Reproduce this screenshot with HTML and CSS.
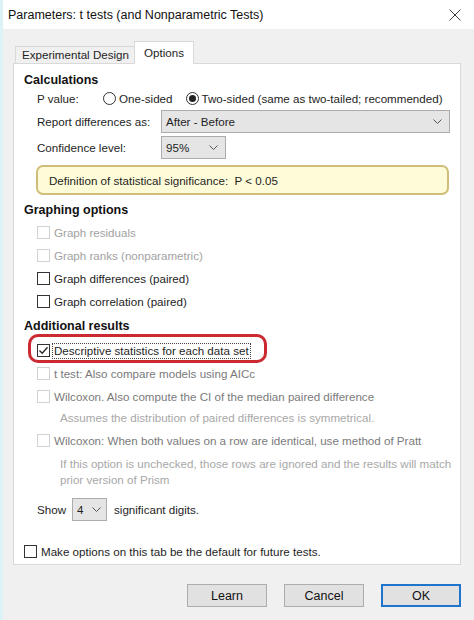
FILE: index.html
```html
<!DOCTYPE html>
<html>
<head>
<meta charset="utf-8">
<link rel="stylesheet" href="styles.css">
</head>
<body>
<div class="window">
  <div class="titlebar">
    <span class="title">Parameters: t tests (and Nonparametric Tests)</span>
    <svg class="close" width="12" height="12" viewBox="0 0 12 12"><path d="M0.5 0.5 L11.5 11.5 M11.5 0.5 L0.5 11.5" stroke="#3a3a3a" stroke-width="1" fill="none"/></svg>
  </div>
  <div class="content">
    <div class="tabs">
      <div class="tab">Experimental Design</div>
      <div class="tab active">Options</div>
    </div>
    <div class="panel">
      <div class="section-title">Calculations</div>
      <div class="row pvalue">
        <span class="plabel">P value:</span>
        <span class="radio"></span><span class="opt1">One-sided</span>
        <span class="radio checked"></span><span>Two-sided (same as two-tailed; recommended)</span>
      </div>
      <div class="row field">
        <span class="flabel">Report differences as:</span>
        <div class="select wide"><span>After - Before</span><svg class="chev" width="9" height="5" viewBox="0 0 9 5"><path d="M0.5 0.5 L4.5 4.5 L8.5 0.5" stroke="#555" fill="none"/></svg></div>
      </div>
      <div class="row field">
        <span class="flabel">Confidence level:</span>
        <div class="select narrow"><span>95%</span><svg class="chev" width="9" height="5" viewBox="0 0 9 5"><path d="M0.5 0.5 L4.5 4.5 L8.5 0.5" stroke="#555" fill="none"/></svg></div>
      </div>
      <div class="note-box">Definition of statistical significance:&nbsp; P &lt; 0.05</div>

      <div class="section-title graph-title">Graphing options</div>
      <div class="row check first-check dis-light"><span class="cb disabled"></span><span class="cbtext">Graph residuals</span></div>
      <div class="row check dis-light"><span class="cb disabled"></span><span class="cbtext">Graph ranks (nonparametric)</span></div>
      <div class="row check"><span class="cb"></span><span class="cbtext">Graph differences (paired)</span></div>
      <div class="row check"><span class="cb"></span><span class="cbtext">Graph correlation (paired)</span></div>

      <div class="section-title add-title">Additional results</div>
      <div class="row check desc">
        <span class="cb"><svg width="13" height="13" viewBox="0 0 13 13"><path d="M2.5 6.5 L5.2 9.2 L10.5 3.2" stroke="#222" stroke-width="1.3" fill="none"/></svg></span>
        <span class="focus">Descriptive statistics for each data set</span>
        <span class="highlight"></span>
      </div>
      <div class="row check dis"><span class="cb disabled"></span><span class="cbtext">t test: Also compare models using AICc</span></div>
      <div class="row check dis"><span class="cb disabled"></span><span class="cbtext">Wilcoxon. Also compute the CI of the median paired difference</span></div>
      <div class="hint one">Assumes the distribution of paired differences is symmetrical.</div>
      <div class="row check dis w2"><span class="cb disabled"></span><span class="cbtext">Wilcoxon: When both values on a row are identical, use method of Pratt</span></div>
      <div class="hint two">If this option is unchecked, those rows are ignored and the results will match<br>prior version of Prism</div>

      <div class="row show">
        <span>Show</span>
        <div class="select digits"><span>4</span><svg class="chev" width="9" height="5" viewBox="0 0 9 5"><path d="M0.5 0.5 L4.5 4.5 L8.5 0.5" stroke="#555" fill="none"/></svg></div>
        <span>significant digits.</span>
      </div>

      <div class="row make"><span class="cb"></span><span class="maketext">Make options on this tab be the default for future tests.</span></div>
    </div>
    <div class="buttons">
      <button class="btn">Learn</button>
      <button class="btn">Cancel</button>
      <button class="btn default">OK</button>
    </div>
  </div>
</div>
</body>
</html>
```
FILE: styles.css
```css
* { box-sizing: border-box; }
html, body { margin: 0; padding: 0; }
body {
  width: 474px;
  height: 620px;
  overflow: hidden;
  font-family: "Liberation Sans", Arial, sans-serif;
  font-size: 11.6px;
  color: #1e1e1e;
  background: #f0f0f0;
}
.window {
  height: 620px;
  border-left: 3px solid #dcf3f6;
  display: flex;
  flex-direction: column;
}
.titlebar {
  height: 29px;
  background: #fff;
  display: flex;
  align-items: center;
  justify-content: space-between;
  padding: 0 13px 0 5px;
  font-size: 12.5px;
  color: #111;
}
.close { display: block; }
.content {
  padding: 12px 13px 0 10px;
  display: flex;
  flex-direction: column;
}
.tabs {
  display: flex;
  align-items: flex-end;
  height: 22px;
  margin-left: 2px;
  white-space: nowrap;
}
.tab {
  height: 17px;
  line-height: 15px;
  padding: 0 5px 0 6px;
  border: 1px solid #d9d9d9;
  border-bottom: none;
  background: #f0f0f0;
}
.tab.active {
  height: 23px;
  line-height: 16px;
  padding: 3px 9px 0 9px;
  background: #fff;
  margin-bottom: -1px;
  margin-left: -1px;
  position: relative;
  z-index: 1;
}
.panel {
  height: 502px;
  background: #fff;
  border: 1px solid #d9d9d9;
  padding: 8px 10px 3px 10px;
  display: flex;
  flex-direction: column;
}
.section-title {
  font-weight: bold;
  font-size: 12.5px;
  line-height: 16px;
  height: 16px;
  color: #111;
}
.graph-title { margin-top: 7px; }
.add-title { margin-top: 5px; }
.row {
  display: flex;
  align-items: center;
  margin-left: 13px;
  white-space: nowrap;
}
.pvalue { height: 18px; margin-top: 1px; }
.plabel { width: 66px; }
.opt1 { margin-right: 13px; }
.radio {
  width: 13px;
  height: 13px;
  border: 1px solid #333;
  border-radius: 50%;
  margin-right: 3px;
  display: flex;
  align-items: center;
  justify-content: center;
  background: #fff;
  flex: none;
}
.radio.checked::after {
  content: "";
  width: 7px;
  height: 7px;
  border-radius: 50%;
  background: #222;
}
.field { height: 23px; margin-top: 3px; }
.flabel { width: 124px; flex: none; }
.select {
  height: 23px;
  border: 1px solid #acacac;
  background: #e5e5e5;
  display: flex;
  align-items: center;
  justify-content: space-between;
  padding: 0 7px 0 4px;
  flex: none;
}
.select.wide { width: 289px; }
.select.narrow { width: 65px; }
.chev { display: block; }
.note-box {
  margin: 6px 1px 0 12px;
  height: 30px;
  border: 2px solid #d0bd78;
  border-radius: 7px;
  background: #fefbd8;
  display: flex;
  align-items: center;
  padding-left: 11px;
  white-space: nowrap;
}
.check { height: 23px; }
.first-check { margin-top: 3px; }
.cb {
  width: 13px;
  height: 13px;
  border: 1px solid #333;
  background: #fff;
  display: block;
  flex: none;
  position: relative;
}
.cb svg { position: absolute; left: -1px; top: -1px; }
.cb.disabled { border-color: #d2d2d2; }
.cbtext { margin-left: 4px; }
.dis-light { color: #a2a2a2; }
.dis { color: #7a7a7a; }
.desc { margin-top: 5px; position: relative; }
.focus {
  margin-left: 3px;
  padding: 0 1px;
  line-height: 14px;
  outline: 1px dotted #444;
  outline-offset: 0;
}
.highlight {
  position: absolute;
  left: -9px;
  top: -5px;
  width: 239px;
  height: 29px;
  border: 3px solid #cc2a31;
  border-radius: 10px;
}
.hint {
  margin-left: 36px;
  color: #a8a8a8;
  white-space: nowrap;
}
.hint.one { height: 20px; line-height: 20px; }
.w2 { margin-top: 1px; }
.hint.two { line-height: 16px; margin-top: 4px; }
.show { height: 23px; margin-top: 10px; }
.select.digits { width: 35px; margin: 0 7px 0 6px; padding: 0 5px 0 4px; }
.make { margin: auto 0 0 0; height: 20px; }
.maketext { margin-left: 4px; }
.buttons {
  display: flex;
  justify-content: flex-end;
  gap: 17px;
  margin-top: 19px;
}
.btn {
  width: 80px;
  height: 23px;
  border: 1px solid #adadad;
  background: #e1e1e1;
  font-family: inherit;
  font-size: 12.5px;
  color: #111;
  padding: 0;
  border-radius: 0;
}
.btn.default { border: 2px solid #1f74cc; }
```
